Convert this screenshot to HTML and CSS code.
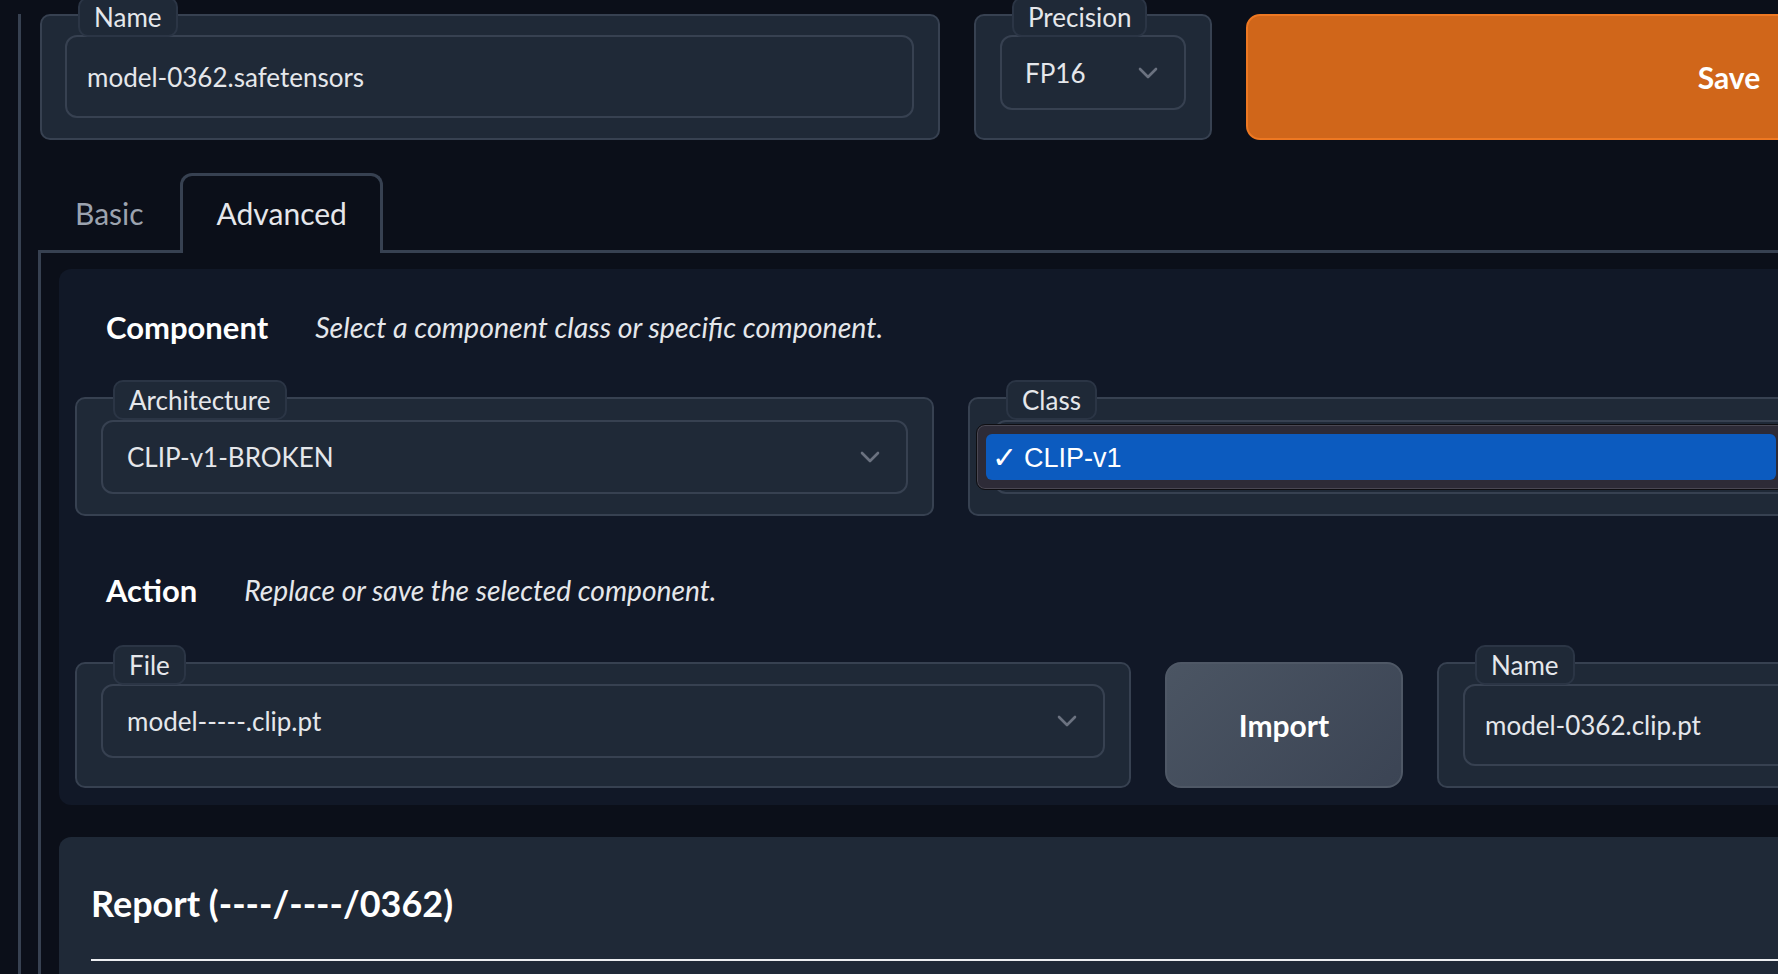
FILE: index.html
```html
<!DOCTYPE html>
<html lang="en">
<head>
<meta charset="utf-8">
<title>Model editor</title>
<link rel="stylesheet" href="styles.css">
</head>
<body>
<div class="frame">
  <div class="toprow">
    <div class="block block-name">
      <span class="chip">Name</span>
      <div class="textbox textbox-tall">model-0362.safetensors</div>
    </div>
    <div class="block block-prec">
      <span class="chip">Precision</span>
      <div class="select select-prec">
        <span>FP16</span>
        <svg class="chev" viewBox="0 0 20 12" width="20" height="12"><polyline points="2,2 10,10 18,2"/></svg>
      </div>
    </div>
    <button class="btn btn-save">Save</button>
  </div>

  <div class="tabs">
    <div class="tabnav">
      <button class="tab">Basic</button>
      <button class="tab active">Advanced</button>
    </div>
    <div class="tabpanel">
      <section class="panel">
        <div class="sec-head">
          <strong>Component</strong>
          <em>Select a component class or specific component.</em>
        </div>
        <div class="row">
          <div class="block block-arch">
            <span class="chip">Architecture</span>
            <div class="select">
              <span>CLIP-v1-BROKEN</span>
              <svg class="chev" viewBox="0 0 20 12" width="20" height="12"><polyline points="2,2 10,10 18,2"/></svg>
            </div>
          </div>
          <div class="block block-class">
            <span class="chip">Class</span>
            <div class="select"></div>
            <div class="popup">
              <div class="popup-item"><span class="check">✓</span><span>CLIP-v1</span></div>
            </div>
          </div>
        </div>
        <div class="sec-head sec-action">
          <strong>Action</strong>
          <em>Replace or save the selected component.</em>
        </div>
        <div class="row">
          <div class="block block-file">
            <span class="chip">File</span>
            <div class="select">
              <span>model-----.clip.pt</span>
              <svg class="chev" viewBox="0 0 20 12" width="20" height="12"><polyline points="2,2 10,10 18,2"/></svg>
            </div>
          </div>
          <button class="btn btn-import">Import</button>
          <div class="block block-name2">
            <span class="chip">Name</span>
            <div class="textbox">model-0362.clip.pt</div>
          </div>
        </div>
      </section>
      <section class="report">
        <h2>Report (----/----/0362)</h2>
        <hr>
      </section>
    </div>
  </div>
</div>
</body>
</html>
```
FILE: styles.css
```css
* { box-sizing: border-box; }

html, body {
  margin: 0;
  height: 100%;
}

body {
  background: #0b0f19;
  overflow: hidden;
  font-family: Lato, "Noto Sans", sans-serif;
  color: #e5e7eb;
}

.frame {
  width: 2240px;
  min-height: 100vh;
  margin-left: 18px;
  border-left: 3px solid #374151;
  padding-left: 17px;
}

.toprow {
  display: flex;
  gap: 34px;
  height: 126px;
  margin: 14px 0 0 2px;
}

.block {
  position: relative;
  background: #1f2937;
  border: 2px solid #374151;
  border-radius: 10px;
  padding: 20px 24px 20px 24px;
}

.block-name { flex: 0 0 900px; padding: 19px 24px 20px 23px; }
.block-prec { flex: 0 0 238px; padding: 19px 24px 20px 24px; }

.chip {
  position: absolute;
  top: -19px;
  left: 36px;
  height: 40px;
  padding: 0 14px;
  display: flex;
  align-items: center;
  background: #1f2937;
  border: 2px solid #2b3545;
  border-radius: 10px;
  font-size: 26px;
  line-height: 1;
  color: #e5e7eb;
  z-index: 2;
}

.textbox {
  height: 82px;
  display: flex;
  align-items: center;
  padding-left: 20px;
  background: #1f2937;
  border: 2px solid #374151;
  border-radius: 12px;
  font-size: 26px;
  white-space: nowrap;
}

.textbox-tall { height: 83px; }

.select {
  height: 74px;
  display: flex;
  align-items: center;
  justify-content: space-between;
  padding: 0 26px 0 24px;
  background: #1f2937;
  border: 2px solid #374151;
  border-radius: 12px;
  font-size: 26px;
  white-space: nowrap;
}

.select-prec { height: 75px; padding: 0 26px 0 23px; }

.chev {
  flex: none;
  fill: none;
  stroke: #6b7280;
  stroke-width: 2.6;
  stroke-linecap: round;
  stroke-linejoin: round;
}

.btn {
  font-family: Lato, "Noto Sans", sans-serif;
  font-weight: 700;
  font-size: 30px;
  color: #ffffff;
  cursor: pointer;
}

.btn-save {
  flex: 0 0 966px;
  background: #d0661a;
  border: 2px solid #ee7822;
  border-radius: 14px;
}

.tabs { margin-top: 33px; }

.tabnav {
  display: flex;
  align-items: flex-end;
  height: 80px;
  border-bottom: 3px solid #374151;
}

.tab {
  height: 77px;
  display: flex;
  align-items: center;
  padding: 0 33px 0 34px;
  background: none;
  border: 3px solid transparent;
  border-bottom: none;
  border-radius: 12px 12px 0 0;
  font-family: Lato, "Noto Sans", sans-serif;
  font-size: 30px;
  color: #9ca3af;
}

.tab.active {
  height: 80px;
  margin-bottom: -3px;
  padding-bottom: 3px;
  border-color: #374151;
  background: #0b0f19;
  color: #e5e7eb;
}

.tabpanel {
  border-left: 3px solid #374151;
  padding: 16px 0 0 18px;
  min-height: 800px;
}

.panel {
  background: #111827;
  border-radius: 12px;
  padding: 16px 16px 17px 16px;
}

.sec-head {
  height: 84px;
  display: flex;
  align-items: center;
  gap: 47px;
  padding-left: 31px;
  margin-bottom: 28px;
}

.sec-head strong {
  font-size: 31px;
  font-weight: 700;
  color: #ffffff;
}

.sec-head em {
  font-size: 28.5px;
  color: #e5e7eb;
}

.sec-action { margin: 32px 0 30px; }
.sec-action em { font-size: 28.2px; }

.row {
  display: flex;
  gap: 34px;
}

.block-arch { flex: 0 0 859px; padding: 21px 24px 20px 24px; }
.block-class { flex: 1; padding: 21px 24px 20px 24px; }
.block-file { flex: 0 0 1056px; }
.block-name2 { flex: 1; padding: 20px 24px 20px 24px; }

.btn-import {
  flex: 0 0 238px;
  background: linear-gradient(135deg, #4b5563, #3b4454);
  border: 2px solid #4f5866;
  border-radius: 16px;
}

.popup {
  position: absolute;
  top: 25px;
  left: 6px;
  width: 810px;
  height: 66px;
  padding: 9px;
  background: #2d2b37;
  border: 1px solid #0e0e12;
  box-shadow: inset 0 0 0 1px #4a4853;
  border-radius: 9px;
  z-index: 3;
}

.popup-item {
  height: 46px;
  display: flex;
  align-items: center;
  padding-left: 6px;
  padding-top: 2px;
  background: #0c5bbf;
  border-radius: 6px;
  font-family: "Liberation Sans", Arial, sans-serif;
  font-size: 27px;
  color: #ffffff;
}

.check {
  width: 32px;
  font-family: "DejaVu Sans", sans-serif;
  font-size: 30px;
  line-height: 1;
}

.report {
  margin-top: 32px;
  height: 240px;
  background: #1f2937;
  border-radius: 12px;
  padding: 40px 32px 0;
}

.report h2 {
  margin: 0;
  font-size: 36px;
  line-height: 52px;
  font-weight: 700;
  color: #ffffff;
}

.report hr {
  margin: 30px 0 0;
  border: none;
  border-top: 2px solid #eceef1;
}
```
